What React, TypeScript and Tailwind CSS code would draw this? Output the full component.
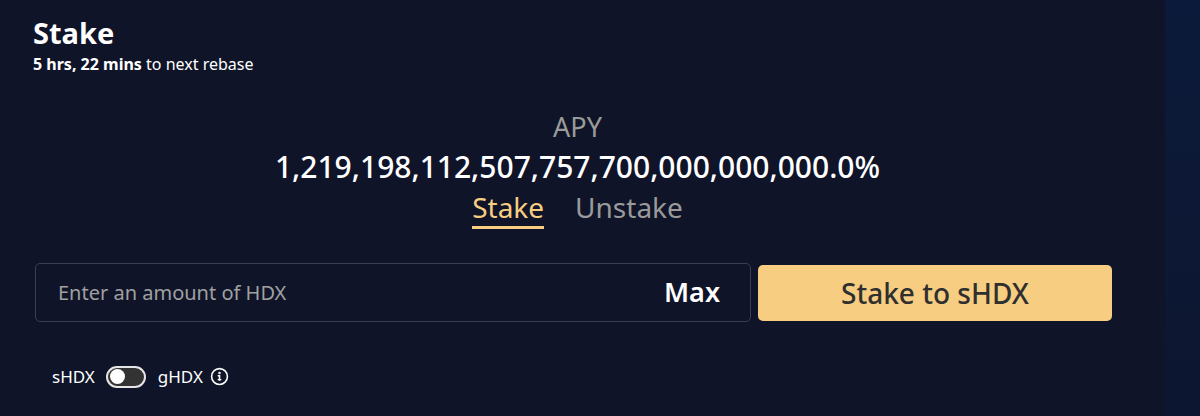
import React, { useState } from "react";

const font = { fontFamily: '"Noto Sans", "Liberation Sans", sans-serif' };

const StakePanel = () => {
  const [tab, setTab] = useState<"stake" | "unstake">("stake");
  const [amount, setAmount] = useState("");
  const [gHdx, setGHdx] = useState(false);

  return (
    <div className="w-[1165px] h-full bg-[#0f1429] text-white flex flex-col">
      <div className="pl-[33px] pt-[13px]">
        <h1 className="text-[29px] leading-[40px] font-bold">Stake</h1>
        <p className="text-[16px] leading-[22px]">
          <span className="font-bold">5 hrs, 22 mins</span> to next rebase
        </p>
      </div>

      <div className="flex flex-col items-center mt-[36px] ml-[-10px]">
        <span className="text-[27px] leading-[32px] text-[#9a9a9a]">APY</span>
        <span className="text-[30px] leading-[48px] font-medium">
          1,219,198,112,507,757,700,000,000,000.0%
        </span>
        <div className="flex gap-[31px] text-[28px] leading-[32px]">
          <button
            onClick={() => setTab("stake")}
            className={
              tab === "stake"
                ? "text-[#f7cd82] border-b-[3px] border-[#f7cd82] pb-[3px]"
                : "text-[#9a9a9a] border-b-[3px] border-transparent pb-[3px]"
            }
          >
            Stake
          </button>
          <button
            onClick={() => setTab("unstake")}
            className={
              tab === "unstake"
                ? "text-[#f7cd82] border-b-[3px] border-[#f7cd82] pb-[3px]"
                : "text-[#9a9a9a] border-b-[3px] border-transparent pb-[3px]"
            }
          >
            Unstake
          </button>
        </div>
      </div>

      <div className="flex items-center gap-[7px] pl-[35px] mt-[34px]">
        <div className="w-[716px] h-[59px] rounded-[5px] border border-[#3a3f52] flex items-center pl-[22px] pr-[30px]">
          <input
            value={amount}
            onChange={(e) => setAmount(e.target.value)}
            placeholder="Enter an amount of HDX"
            className="flex-1 bg-transparent outline-none text-[20px] text-white placeholder:text-[#a0a0a0]"
          />
          <button className="text-[27px] font-semibold text-white">Max</button>
        </div>
        <button className="w-[354px] h-[56px] rounded-[5px] bg-[#f7cd82] text-[#2f2f2f] text-[28px] font-medium">
          {tab === "stake" ? "Stake to sHDX" : "Unstake"}
        </button>
      </div>

      <div className="flex items-center pl-[52px] mt-[42px] text-[17px]">
        <span>sHDX</span>
        <button
          onClick={() => setGHdx(!gHdx)}
          className={
            "ml-[11px] w-[40px] h-[22px] rounded-full border-2 border-[#e5e5e5] bg-[#333] flex items-center px-[2px] " +
            (gHdx ? "justify-end" : "justify-start")
          }
        >
          <span className="w-[15px] h-[15px] rounded-full bg-white" />
        </button>
        <span className="ml-[12px]">gHDX</span>
        <svg
          className="ml-[7px]"
          width="19"
          height="19"
          viewBox="0 0 24 24"
          fill="none"
          stroke="white"
          strokeWidth="2"
          strokeLinecap="round"
        >
          <circle cx="12" cy="12" r="10" />
          <path d="M12 16v-5" />
          <path d="M10.5 16h3" />
          <path d="M10.5 11H12" />
          <circle cx="12" cy="7.5" r="0.6" fill="white" />
        </svg>
      </div>
    </div>
  );
};

export default function App() {
  return (
    <div className="w-[1200px] h-[416px] flex overflow-hidden bg-[#0c1a38]" style={font}>
      <StakePanel />
      <div className="flex-1 bg-gradient-to-b from-[#0b1a3a] to-[#0d1630]" />
    </div>
  );
}
